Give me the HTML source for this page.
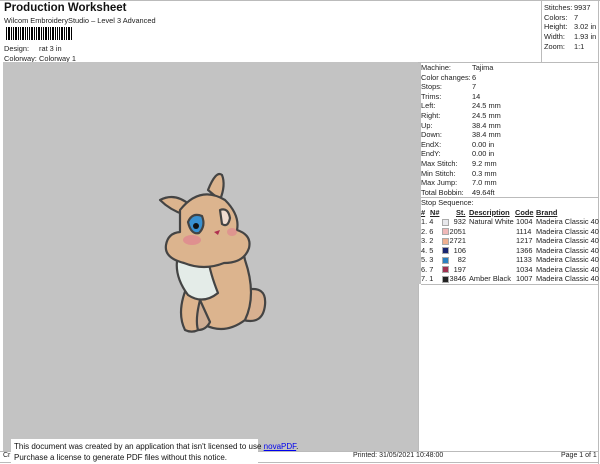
<!DOCTYPE html><html><head><style>
body{margin:0;width:600px;height:464px;background:#fff;position:relative;overflow:hidden;font-family:"Liberation Sans",sans-serif;font-size:7.4px;color:#222}
.a{position:absolute;white-space:nowrap}
.bc span{display:inline-block;height:13px;background:#000;margin-right:1px;vertical-align:top}
</style></head><body>
<div class="a" style="left:0;top:0;width:600px;height:1px;background:#bbb"></div>
<div class="a" style="left:4px;top:2px;font-size:11.5px;font-weight:bold;color:#111">Production Worksheet</div>
<div class="a" style="left:4px;top:16px">Wilcom EmbroideryStudio – Level 3 Advanced</div>
<div class="a bc" style="left:6px;top:27px;line-height:0">
<span style="width:1px"></span><span style="width:2px"></span><span style="width:1px"></span><span style="width:1px"></span><span style="width:2px"></span><span style="width:1px"></span><span style="width:1px"></span><span style="width:2px"></span><span style="width:1px"></span><span style="width:1px"></span><span style="width:1px"></span><span style="width:2px"></span><span style="width:1px"></span><span style="width:1px"></span><span style="width:2px"></span><span style="width:1px"></span><span style="width:1px"></span><span style="width:2px"></span><span style="width:1px"></span><span style="width:1px"></span><span style="width:2px"></span><span style="width:1px"></span><span style="width:1px"></span><span style="width:1px"></span><span style="width:2px"></span><span style="width:1px"></span><span style="width:1px"></span><span style="width:2px"></span><span style="width:1px"></span></div>
<div class="a" style="left:4px;top:44px">Design:</div><div class="a" style="left:39px;top:44px">rat 3 in</div>
<div class="a" style="left:4px;top:54px">Colorway:</div><div class="a" style="left:39px;top:54px">Colorway 1</div>
<div class="a" style="left:541px;top:0;width:1px;height:62px;background:#bbb"></div>
<div class="a" style="left:598px;top:0;width:1px;height:464px;background:#bbb"></div>
<div class="a" style="left:544px;top:3px;line-height:9.7px">Stitches:<br>Colors:<br>Height:<br>Width:<br>Zoom:</div>
<div class="a" style="left:574px;top:3px;line-height:9.7px">9937<br>7<br>3.02 in<br>1.93 in<br>1:1</div>
<div class="a" style="left:3px;top:62px;width:415px;height:389px;background:#c3c3c3"></div>
<div class="a" style="left:418px;top:62px;width:3px;height:222px;background:#c3c3c3"></div>
<div class="a" style="left:418px;top:62px;width:180px;height:1px;background:#bbb"></div>
<div class="a" style="left:421px;top:197px;width:177px;height:1px;background:#bbb"></div>
<div class="a" style="left:421px;top:284px;width:177px;height:1px;background:#bbb"></div>
<div class="a" style="left:418px;top:284px;width:1px;height:167px;background:#bbb"></div>
<div class="a" style="left:421px;top:63px;line-height:9.6px">Machine:<br>Color changes:<br>Stops:<br>Trims:<br>Left:<br>Right:<br>Up:<br>Down:<br>EndX:<br>EndY:<br>Max Stitch:<br>Min Stitch:<br>Max Jump:<br>Total Bobbin:</div>
<div class="a" style="left:472px;top:63px;line-height:9.6px">Tajima<br>6<br>7<br>14<br>24.5 mm<br>24.5 mm<br>38.4 mm<br>38.4 mm<br>0.00 in<br>0.00 in<br>9.2 mm<br>0.3 mm<br>7.0 mm<br>49.64ft</div>
<div class="a" style="left:421px;top:198px">Stop Sequence:</div>
<div class="a" style="left:421px;top:208px;font-weight:bold;text-decoration:underline">#</div>
<div class="a" style="left:430px;top:208px;font-weight:bold;text-decoration:underline">N#</div>
<div class="a" style="left:456px;top:208px;font-weight:bold;text-decoration:underline">St.</div>
<div class="a" style="left:469px;top:208px;font-weight:bold;text-decoration:underline">Description</div>
<div class="a" style="left:515px;top:208px;font-weight:bold;text-decoration:underline">Code</div>
<div class="a" style="left:536px;top:208px;font-weight:bold;text-decoration:underline">Brand</div>
<div class="a" style="left:421px;top:217px;line-height:9.5px">1. 4<br>2. 6<br>3. 2<br>4. 5<br>5. 3<br>6. 7<br>7. 1</div>
<div class="a" style="left:442px;top:218.5px;line-height:9.5px">
<div style="width:5px;height:5px;background:#e8e8ec;border:1px solid #aaa;margin-bottom:2.5px"></div>
<div style="width:5px;height:5px;background:#f0b8b8;border:1px solid #aaa;margin-bottom:2.5px"></div>
<div style="width:5px;height:5px;background:#f0b090;border:1px solid #aaa;margin-bottom:2.5px"></div>
<div style="width:5px;height:5px;background:#1a2570;border:1px solid #aaa;margin-bottom:2.5px"></div>
<div style="width:5px;height:5px;background:#2a80c0;border:1px solid #aaa;margin-bottom:2.5px"></div>
<div style="width:5px;height:5px;background:#a03050;border:1px solid #aaa;margin-bottom:2.5px"></div>
<div style="width:5px;height:5px;background:#222;border:1px solid #aaa"></div></div>
<div class="a" style="left:448px;top:217px;width:18px;text-align:right;line-height:9.5px">932<br>2051<br>2721<br>106<br>82<br>197<br>3846</div>
<div class="a" style="left:469px;top:217px;line-height:9.5px">Natural White<br><br><br><br><br><br>Amber Black</div>
<div class="a" style="left:516px;top:217px;line-height:9.5px">1004<br>1114<br>1217<br>1366<br>1133<br>1034<br>1007</div>
<div class="a" style="left:536px;top:217px;line-height:9.5px">Madeira Classic 40<br>Madeira Classic 40<br>Madeira Classic 40<br>Madeira Classic 40<br>Madeira Classic 40<br>Madeira Classic 40<br>Madeira Classic 40</div>
<svg class="a" style="left:150px;top:170px" width="125" height="170" viewBox="0 0 125 170">
<g stroke="#444" stroke-width="2.2" stroke-linejoin="round">
<path d="M95 120 q22 -5 20 15 q-2 20 -22 15z" fill="#d8b090"/>
<path d="M40 110 q-15 30 -5 50 q10 5 20 -5 q20 10 40 -5 q12 -25 0 -60 q-5 -25 -15 -35z" fill="#dcb48e"/>
<path d="M50 130 q-5 20 -2 30 q8 0 12 -8z" fill="#cfae94"/>
<path d="M28 85 q-5 20 10 40 q15 10 30 -2 q-8 -20 -10 -35z" fill="#e4ece8"/>
<path d="M58 20 q8 -20 14 -15 q4 10 -2 25z" fill="#dcb48e"/>
<path d="M10 30 q15 -8 30 5 l-5 10 q-15 -5 -25 -15z" fill="#dcb48e"/>
<path d="M30 40 q20 -25 45 -10 q15 15 12 30 q15 5 12 18 q-5 15 -25 15 q-20 8 -40 0 q-20 -5 -18 -18 q2 -12 14 -13z" fill="#dcb48e"/>
<path d="M38 52 q4 -10 14 -6 q4 10 -3 17 q-8 2 -11 -11z" fill="#3890d0"/>
<path d="M70 40 q8 -3 10 8 q-2 10 -8 6z" fill="#f0dcd0"/>
</g>
<ellipse cx="42" cy="70" rx="9" ry="5" fill="#e08090" opacity=".7"/>
<ellipse cx="82" cy="62" rx="5" ry="4" fill="#e08090" opacity=".6"/>
<circle cx="46" cy="56" r="3" fill="#111"/>
<path d="M64 62 l6 -2 l-2 5z" fill="#b03050"/>
</svg>
<div class="a" style="left:0;top:451px;width:599px;height:1px;background:#bbb"></div>
<div class="a" style="left:0;top:462px;width:599px;height:1px;background:#bbb"></div>
<div class="a" style="left:3px;top:452px;font-size:7px">Cr</div>
<div class="a" style="left:353px;top:452px;font-size:7px">Printed: 31/05/2021 10:48:00</div>
<div class="a" style="left:561px;top:452px;font-size:7px">Page 1 of 1</div>
<div class="a" style="left:11px;top:439px;width:247px;height:25px;background:#fff"></div>
<div class="a" style="left:14px;top:441px;font-size:8px;line-height:11px;color:#111">This document was created by an application that isn't licensed to use <span style="color:#00e;text-decoration:underline">novaPDF</span>.<br>Purchase a license to generate PDF files without this notice.</div>
</body></html>
